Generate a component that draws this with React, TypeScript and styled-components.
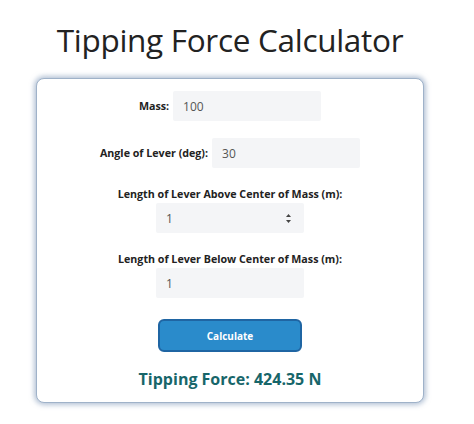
import { createGlobalStyle, styled } from 'styled-components';

const GlobalStyle = createGlobalStyle`
  html, body {
    margin: 0;
    padding: 0;
    background: #ffffff;
    font-family: "Open Sans", "Noto Sans", sans-serif;
  }
`;

type Field = {
  label: string;
  value: string;
  stacked?: boolean;
  spinner?: boolean;
};

const fields: Field[] = [
  { label: 'Mass:', value: '100' },
  { label: 'Angle of Lever (deg):', value: '30' },
  { label: 'Length of Lever Above Center of Mass (m):', value: '1', stacked: true, spinner: true },
  { label: 'Length of Lever Below Center of Mass (m):', value: '1', stacked: true },
];

export default function App() {
  return (
    <Page>
      <GlobalStyle />
      <Title>Tipping Force Calculator</Title>
      <Card>
        {fields.map((f) => (
          <Group key={f.label} $stacked={f.stacked}>
            <Label>{f.label}</Label>
            <InputWrap>
              <Input type="text" defaultValue={f.value} />
              {f.spinner && (
                <Spinner width="7" height="11" viewBox="0 0 7 11">
                  <path d="M3.5 1 L6 4 L1 4 Z" fill="#444" />
                  <path d="M3.5 10 L6 7 L1 7 Z" fill="#444" />
                </Spinner>
              )}
            </InputWrap>
          </Group>
        ))}
        <Button type="button">Calculate</Button>
        <Result>Tipping Force: 424.35 N</Result>
      </Card>
    </Page>
  );
}

const Page = styled.div`
  width: 460px;
  height: 424px;
  display: flex;
  flex-direction: column;
  align-items: center;
  padding-top: 17px;
  box-sizing: border-box;
`;

const Title = styled.h1`
  margin: 0 0 15px;
  font-size: 31.5px;
  font-weight: 400;
  color: #222222;
  line-height: 46px;
  letter-spacing: -0.3px;
`;

const Card = styled.div`
  width: 388px;
  box-sizing: border-box;
  background: #ffffff;
  border-radius: 8px;
  border: 1px solid #9fb2c9;
  box-shadow: 0 0 5px 2px rgba(120, 145, 180, 0.55);
  padding: 12px 0 12px;
  display: flex;
  flex-direction: column;
  align-items: center;
`;

const Group = styled.div<{ $stacked?: boolean }>`
  display: flex;
  flex-direction: ${(p) => (p.$stacked ? 'column' : 'row')};
  align-items: center;
  justify-content: center;
  gap: ${(p) => (p.$stacked ? '0' : '4px')};
  margin-bottom: 17px;
`;

const Label = styled.label`
  font-size: 10.7px;
  line-height: 18px;
  font-weight: 700;
  color: #222222;
`;

const InputWrap = styled.div`
  position: relative;
`;

const Input = styled.input`
  width: 148px;
  height: 30px;
  box-sizing: border-box;
  border: none;
  border-radius: 2px;
  background: #f4f5f7;
  padding: 0 10px;
  font-family: inherit;
  font-size: 12px;
  color: #555555;
  outline: none;
`;

const Spinner = styled.svg`
  position: absolute;
  right: 12px;
  top: 10px;
`;

const Button = styled.button`
  margin-top: 4px;
  width: 144px;
  height: 33px;
  box-sizing: border-box;
  border: 2px solid #1f65a3;
  border-radius: 6px;
  background: #2a8bcb;
  color: #ffffff;
  font-family: inherit;
  font-size: 10px;
  font-weight: 700;
  cursor: pointer;
`;

const Result = styled.div`
  margin-top: 16px;
  line-height: 22px;
  font-size: 16px;
  font-weight: 700;
  color: #17666a;
`;
